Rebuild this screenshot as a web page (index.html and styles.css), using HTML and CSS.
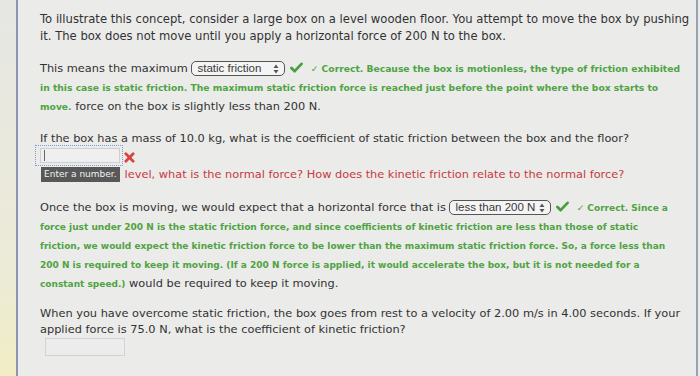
FILE: index.html
```html
<!DOCTYPE html>
<html>
<head>
<meta charset="utf-8">
<link rel="stylesheet" href="styles.css">
</head>
<body>
<div class="page">
  <div class="strip"></div>
  <div class="content">
    <p class="para p1">To illustrate this concept, consider a large box on a level wooden floor. You attempt to move the box by pushing it. The box does not move until you apply a horizontal force of 200 N to the box.</p>

    <p class="para p2">This means the maximum <span class="select sel1"><span class="opt">static friction</span><svg class="arrows" viewBox="0 0 6 10" width="6" height="10"><path d="M3 0.5 L5.5 4 L0.5 4 Z M3 9.5 L5.5 6 L0.5 6 Z" fill="#555"/></svg></span> <svg class="check" viewBox="0 0 14 12" width="13" height="11"><path d="M1.5 6.5 L5 10 L12.5 2" fill="none" stroke="#4a9e3f" stroke-width="3" stroke-linecap="round" stroke-linejoin="round"/></svg> <span class="fb fb1">&#x2713; Correct. Because the box is motionless, the type of friction exhibited<br>in this case is static friction. The maximum static friction force is reached just before the point where the box starts to<br>move.</span> force on the box is slightly less than 200 N.</p>

    <p class="para p3">If the box has a mass of 10.0 kg, what is the coefficient of static friction between the box and the floor?</p>
    <div class="answer-row">
      <div class="focus"><div class="input"><span class="caret"></span></div></div>
      <svg class="cross" viewBox="0 0 12 12" width="11" height="11"><path d="M2 2 L10 10 M10 2 L2 10" stroke="#d9443f" stroke-width="3" stroke-linecap="round"/></svg>
    </div>
    <p class="para red"><span class="tip">Enter a number.</span> level, what is the normal force? How does the kinetic friction relate to the normal force?</p>

    <p class="para p4">Once the box is moving, we would expect that a horizontal force that is <span class="select sel2"><span class="opt">less than 200 N</span><svg class="arrows" viewBox="0 0 6 10" width="6" height="10"><path d="M3 0.5 L5.5 4 L0.5 4 Z M3 9.5 L5.5 6 L0.5 6 Z" fill="#555"/></svg></span> <svg class="check" viewBox="0 0 14 12" width="13" height="11"><path d="M1.5 6.5 L5 10 L12.5 2" fill="none" stroke="#4a9e3f" stroke-width="3" stroke-linecap="round" stroke-linejoin="round"/></svg> <span class="fb">&#x2713; Correct. Since a<br>force just under 200 N is the static friction force, and since coefficients of kinetic friction are less than those of static<br>friction, we would expect the kinetic friction force to be lower than the maximum static friction force. So, a force less than<br>200 N is required to keep it moving. (If a 200 N force is applied, it would accelerate the box, but it is not needed for a<br>constant speed.)</span> would be required to keep it moving.</p>

    <p class="para p5">When you have overcome static friction, the box goes from rest to a velocity of 2.00 m/s in 4.00 seconds. If your applied force is 75.0 N, what is the coefficient of kinetic friction?</p>
    <div class="input2"></div>
  </div>
</div>
</body>
</html>
```
FILE: styles.css
```css
html, body {
  margin: 0;
  padding: 0;
}
body {
  background: #ebebea;
  font-family: "DejaVu Sans", Verdana, sans-serif;
  color: #323232;
  width: 700px;
  height: 376px;
  overflow: hidden;
}
.page {
  display: flex;
  height: 376px;
}
.strip {
  width: 16px;
  flex: none;
  background: linear-gradient(#e6e6e4, #ecebd8 70%, #f1edc4);
  border-right: 2px solid #8d95b2;
}
.content {
  flex: none;
  width: 650px;
  padding: 11px 6px 0 22px;
  border-right: 2px solid #9aa0b4;
}
.para {
  margin: 0;
  font-size: 11.35px;
  line-height: 17px;
}
.p1 { font-size: 11.6px; margin-bottom: 14px; }
.p2 { line-height: 19px; margin-bottom: 14px; }
.p3 { margin-bottom: -2px; }
.p4 { line-height: 19px; margin-top: 15px; margin-bottom: 12px; }
.p5 { line-height: 16px; }
.select {
  display: inline-flex;
  align-items: center;
  justify-content: space-between;
  box-sizing: border-box;
  height: 15px;
  font-family: "Liberation Sans", Arial, sans-serif;
  font-size: 11.5px;
  line-height: 13px;
  border: 1px solid #555;
  border-radius: 5px;
  padding: 0 5px 0 5px;
  background: #f4f4f4;
  color: #3a3a3a;
  vertical-align: baseline;
}
.sel1 { width: 94px; }
.sel2 { width: 102px; }
.arrows {
  flex: none;
}
.check {
  vertical-align: -1px;
  margin-left: 1px;
}
.fb {
  color: #4fa342;
  font-weight: bold;
  font-size: 9px;
  line-height: 9px;
  margin-left: 4px;
}
.fb1 { font-size: 9.2px; }
.answer-row {
  display: flex;
  align-items: flex-end;
  gap: 1px;
  margin-left: -5px;
}
.focus {
  border: 1px dotted #7b9fcc;
  padding: 2px 2px 2px 4px;
}
.input {
  width: 78px;
  height: 13px;
  border: 1px solid #cfcfcf;
  background: #efefef;
  position: relative;
}
.caret {
  position: absolute;
  left: 3px;
  top: 1px;
  width: 1px;
  height: 11px;
  background: #666;
}
.cross { margin-bottom: 3px; }
.red {
  color: #c73a3e;
  display: flex;
  align-items: center;
  gap: 5px;
}
.tip {
  background: #585858;
  color: #f2f2f2;
  font-size: 9px;
  padding: 0 3px;
  line-height: 15px;
  margin-left: 1px;
}
.input2 {
  margin-top: 1px;
  margin-left: 5px;
  width: 78px;
  height: 16px;
  border: 1px solid #d3d3d3;
  background: #ececec;
}
```
